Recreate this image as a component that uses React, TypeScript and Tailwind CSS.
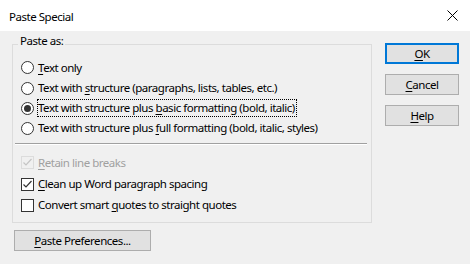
import React from "react";

const font = { fontFamily: '"Noto Sans", "Open Sans", sans-serif' };

function U({ children }: { children: React.ReactNode }) {
  return <span className="underline underline-offset-[2px] decoration-[1px]">{children}</span>;
}

function Radio({ checked }: { checked?: boolean }) {
  return (
    <svg width="13" height="13" viewBox="0 0 13 13" className="shrink-0">
      <circle cx="6.5" cy="6.5" r="6" fill="#fff" stroke="#333" strokeWidth="1" />
      {checked && <circle cx="6.5" cy="6.5" r="3.5" fill="#333" />}
    </svg>
  );
}

function Check({ checked, disabled }: { checked?: boolean; disabled?: boolean }) {
  const c = disabled ? "#c4c4c4" : "#333";
  return (
    <svg width="13" height="13" viewBox="0 0 13 13" className="shrink-0">
      <rect x="0.5" y="0.5" width="12" height="12" fill={disabled ? "#f0f0f0" : "#fff"} stroke={disabled ? "#dcdcdc" : "#333"} />
      {checked && <path d="M2.5 6.5 L5 9 L10.5 3" fill="none" stroke={c} strokeWidth="1.2" />}
    </svg>
  );
}

function Btn({ children, primary, w }: { children: React.ReactNode; primary?: boolean; w: string }) {
  return (
    <div
      className={`${w} h-[21px] flex items-center justify-center bg-[#e1e1e1] text-black ${
        primary ? "border-2 border-[#0078d7]" : "border border-[#adadad]"
      }`}
    >
      {children}
    </div>
  );
}

export default function App() {
  return (
    <div
      className="w-[470px] h-[264px] bg-[#f0f0f0] text-black overflow-hidden text-[11.5px] leading-[16px] tracking-[-0.47px]"
      style={font}
    >
      <div className="h-[31px] bg-white flex items-center justify-between pl-[9px] pr-[12px]">
        <span className="mt-[2px]">Paste Special</span>
        <svg width="11" height="11" viewBox="0 0 11 11">
          <path d="M0.5 0.5 L10.5 10.5 M10.5 0.5 L0.5 10.5" stroke="#000" strokeWidth="1" />
        </svg>
      </div>
      <div className="flex pl-[12px] pt-[12px]">
        <div className="flex flex-col">
          <div className="relative mt-[1px] w-[360px] h-[179px] border border-[#dcdcdc]">
            <span className="absolute left-[5px] top-[-12px] px-[2px] bg-[#f0f0f0]">Paste as:</span>
            <div className="flex flex-col pt-[12px] pl-[8px]">
              <div className="h-[21px] flex items-center gap-[4px]">
                <Radio />
                <span><U>T</U>ext only</span>
              </div>
              <div className="h-[20px] flex items-center gap-[4px]">
                <Radio />
                <span>Text with <U>s</U>tructure (paragraphs, lists, tables, etc.)</span>
              </div>
              <div className="h-[20px] flex items-center gap-[3px]">
                <Radio checked />
                <span className="border border-dotted border-black pr-[1px]">
                  Text with structure plus <U>b</U>asic formatting (bold, italic)
                </span>
              </div>
              <div className="h-[20px] flex items-center gap-[4px]">
                <Radio />
                <span>Text with structure plus <U>f</U>ull formatting (bold, italic, styles)</span>
              </div>
            </div>
            <div className="ml-[2px] mr-[4px] mt-[5px] border-t border-t-[#a0a0a0] border-b border-b-white" />
            <div className="flex flex-col pt-[7px] pl-[8px]">
              <div className="h-[21px] flex items-center gap-[4px] text-[#a0a0a0]">
                <Check checked disabled />
                <span><U>R</U>etain line breaks</span>
              </div>
              <div className="h-[22px] flex items-center gap-[4px]">
                <Check checked />
                <span><U>C</U>lean up Word paragraph spacing</span>
              </div>
              <div className="h-[20px] flex items-center gap-[4px]">
                <Check />
                <span>Convert smart <U>q</U>uotes to straight quotes</span>
              </div>
            </div>
          </div>
          <div className="mt-[7px] ml-[2px]">
            <Btn w="w-[137px]"><span><U>P</U>aste Preferences...</span></Btn>
          </div>
        </div>
        <div className="flex flex-col gap-[10px] ml-[13px]">
          <Btn w="w-[74px]" primary><span><U>O</U>K</span></Btn>
          <Btn w="w-[74px]"><span><U>C</U>ancel</span></Btn>
          <Btn w="w-[74px]"><span><U>H</U>elp</span></Btn>
        </div>
      </div>
    </div>
  );
}
